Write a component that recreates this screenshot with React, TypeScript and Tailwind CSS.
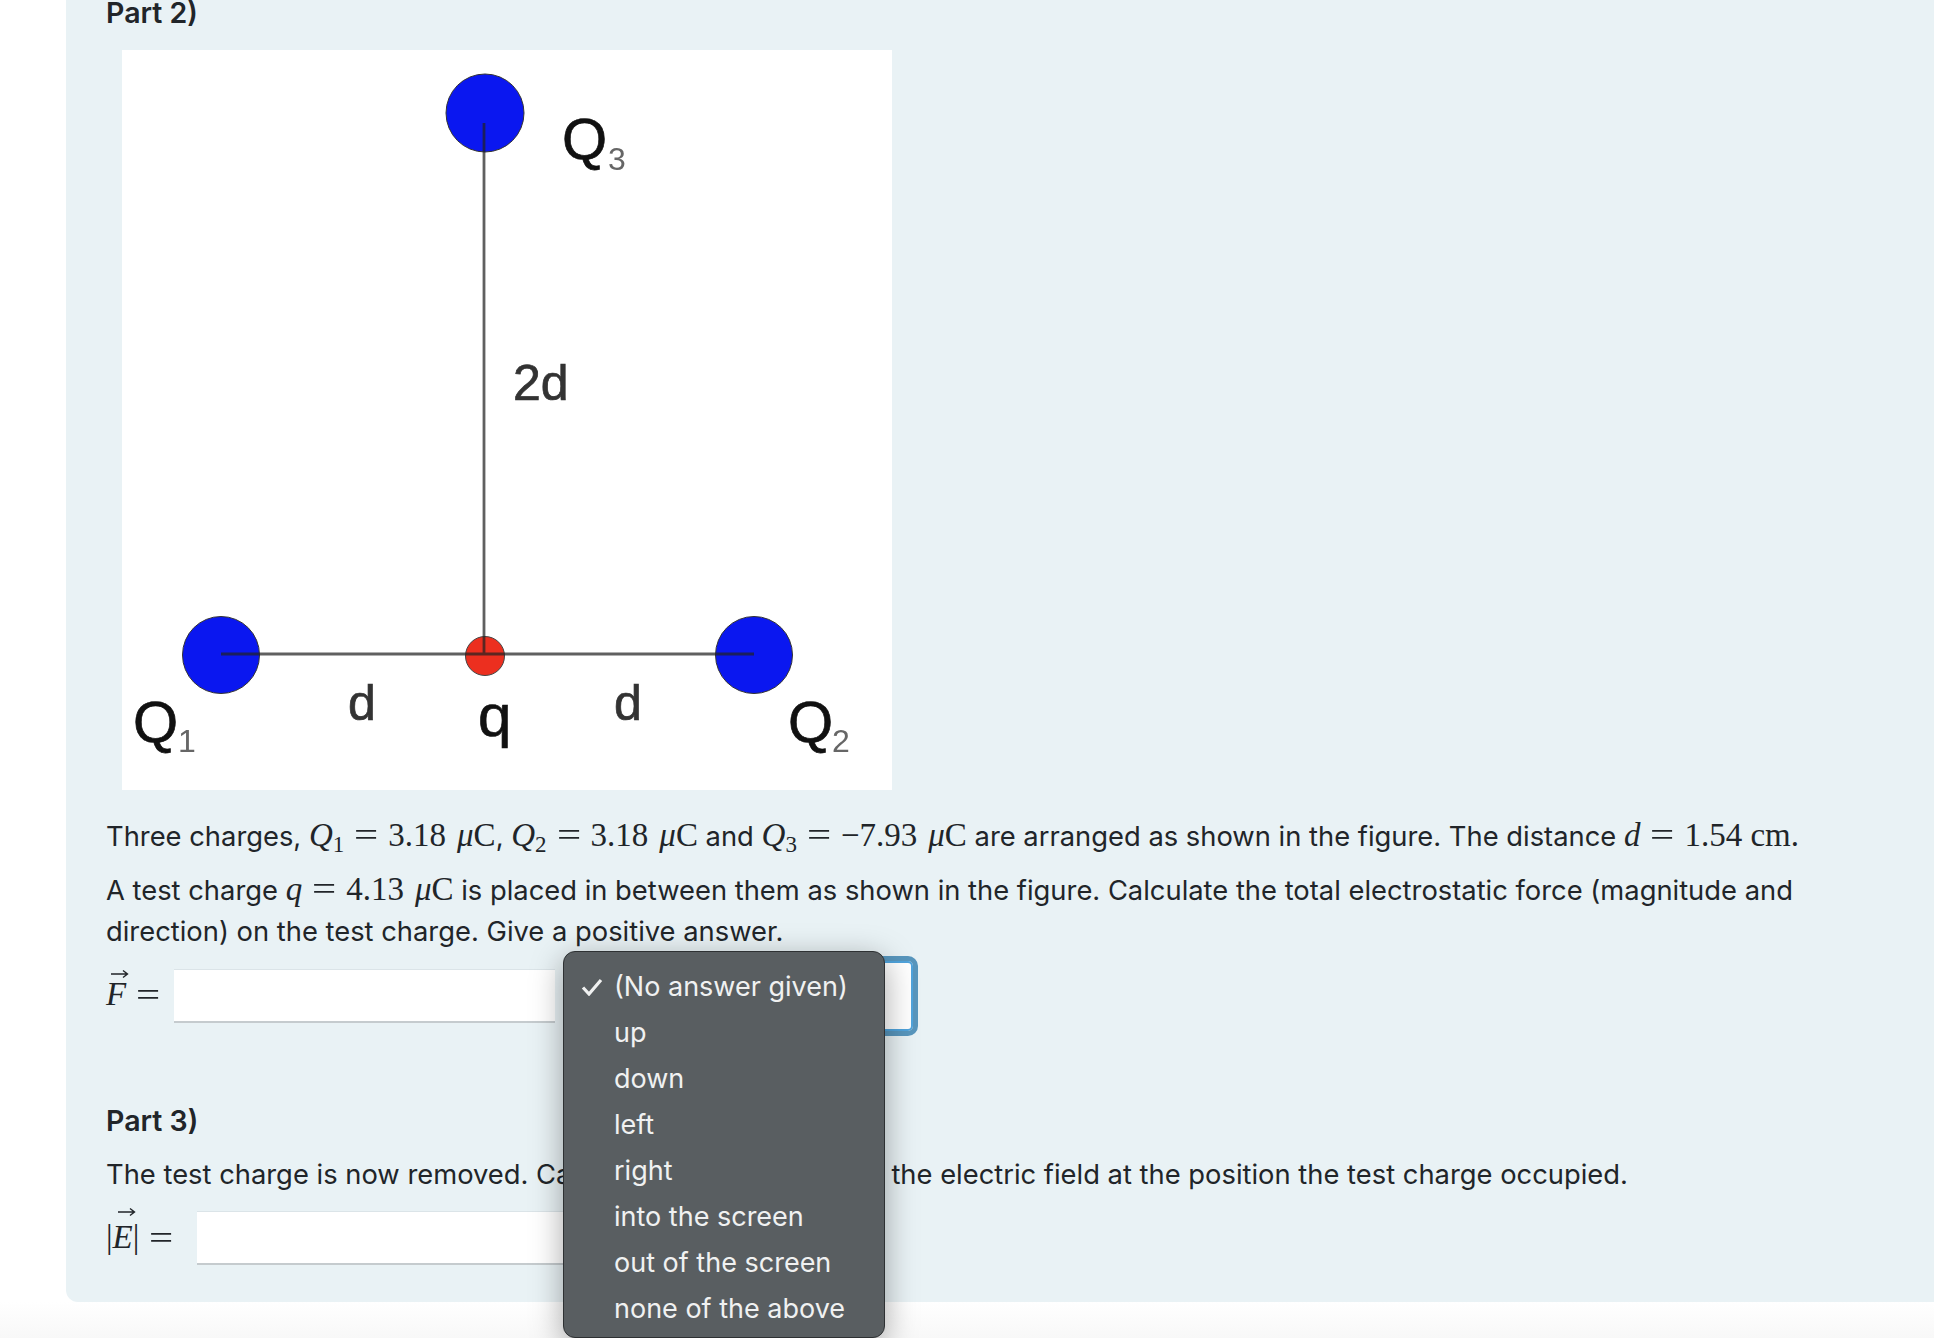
import React from "react";

const serif = "font-['Liberation_Serif',serif]";

function I({ children }: { children: React.ReactNode }) {
  return <span className={`${serif} italic text-[33px] leading-none`}>{children}</span>;
}
function M({ children }: { children: React.ReactNode }) {
  return <span className={`${serif} text-[33px] leading-none`}>{children}</span>;
}
function S({ children }: { children: React.ReactNode }) {
  return <span className={`${serif} text-[23px] leading-none relative top-[6px]`}>{children}</span>;
}
function Eq() {
  return (
    <span className={`${serif} text-[33px] leading-none inline-block w-[24px] text-center scale-x-[1.3] mx-[10px]`}>=</span>
  );
}
function Mu() {
  return <span className={`${serif} italic text-[33px] leading-none ml-[11px]`}>μ</span>;
}
function Vec({ children }: { children: React.ReactNode }) {
  return (
    <span className="relative inline-block">
      <span className={`${serif} italic text-[33px] leading-none`}>{children}</span>
      <svg className="absolute left-[4px] top-[-7px]" width="20" height="12" viewBox="0 0 20 12">
        <path d="M1 6h16M13 2.5l4.5 3.5-4.5 3.5" fill="none" stroke="#212529" strokeWidth="1.4" />
      </svg>
    </span>
  );
}

function Figure() {
  const label = "Liberation Sans, Arial, sans-serif";
  return (
    <svg width="770" height="740" viewBox="0 0 770 740" className="block">
      <g style={{ filter: "blur(0.6px)" }}>
        <circle cx="363" cy="63" r="39" fill="#0a17f0" stroke="#333" strokeWidth="1" />
        <circle cx="99" cy="605" r="38.5" fill="#0a17f0" stroke="#333" strokeWidth="1" />
        <circle cx="632" cy="605" r="38.5" fill="#0a17f0" stroke="#333" strokeWidth="1" />
        <circle cx="363" cy="606" r="19.5" fill="#ec2f1f" stroke="#444" strokeWidth="1" />
        <path d="M362 73V604M99 604H632" fill="none" stroke="#222" strokeOpacity="0.72" strokeWidth="2.8" />
        <g fontFamily={label} fill="#111" stroke="#111" strokeWidth="0.7">
          <text x="440" y="109" fontSize="58">Q</text>
          <text x="486" y="120" fontSize="32" fill="#666" stroke="none">3</text>
          <text x="391" y="350" fontSize="50" fill="#333" stroke="#333">2d</text>
          <text x="11" y="692" fontSize="58">Q</text>
          <text x="56" y="702" fontSize="32" fill="#666" stroke="none">1</text>
          <text x="226" y="670" fontSize="50" fill="#333" stroke="#333">d</text>
          <text x="356" y="686" fontSize="60">q</text>
          <text x="492" y="670" fontSize="50" fill="#333" stroke="#333">d</text>
          <text x="666" y="692" fontSize="58">Q</text>
          <text x="710" y="702" fontSize="32" fill="#666" stroke="none">2</text>
        </g>
      </g>
    </svg>
  );
}

const options = ["up", "down", "left", "right", "into the screen", "out of the screen", "none of the above"];

export default function App() {
  return (
    <div className="relative w-full h-[1338px] overflow-hidden bg-white font-['Inter',sans-serif] text-[27.35px] text-[#212529] flex flex-col">
      <div className="ml-[66px] h-[1302px] shrink-0 bg-[#e9f2f5] rounded-bl-[12px] pl-[40px] pr-[40px]">
        <h3 className="font-semibold text-[28.5px] leading-[40px] mt-[-7px]">Part 2)</h3>
        <div className="ml-[16px] mt-[17px] w-[770px] h-[740px] bg-white">
          <Figure />
        </div>
        <p className="mt-[26px] leading-[41px] whitespace-nowrap">
          Three charges, <I>Q</I>
          <S>1</S>
          <Eq />
          <M>3.18</M>
          <Mu />
          <M>C</M>, <I>Q</I>
          <S>2</S>
          <Eq />
          <M>3.18</M>
          <Mu />
          <M>C</M> and <I>Q</I>
          <S>3</S>
          <Eq />
          <M>−7.93</M>
          <Mu />
          <M>C</M> are arranged as shown in the figure. The distance <I>d</I>
          <Eq />
          <M>1.54 cm.</M>
        </p>
        <p className="mt-[13px] leading-[41px] w-[1760px]">
          A test charge <I>q</I>
          <Eq />
          <M>4.13</M>
          <Mu />
          <M>C</M> is placed in between them as shown in the figure. Calculate the total electrostatic force (magnitude and
          direction) on the test charge. Give a positive answer.
        </p>
        <div className="mt-[19px] flex items-start h-[66px]">
          <span className="w-[68px] h-[53px] -mt-[2px] whitespace-nowrap flex items-center">
            <Vec>F</Vec>
            <Eq />
          </span>
          <div className="w-[381px] h-[54px] -mt-[2px] bg-white border-b-2 border-t border-t-[#dbe4e8] border-b-[#c5cbce]" />
          <div className="ml-[10px] w-[353px] h-[80px] -mt-[15px] bg-white border-[5px] border-[#5896bd] rounded-[10px] shadow-[inset_0_0_0_2px_#4fa3dc]" />
        </div>
        <h3 className="mt-[64px] font-semibold text-[28.5px] leading-[40px]">Part 3)</h3>
        <p className="mt-[13px] leading-[41px]">
          The test charge is now removed. Calculate the magnitude of the electric field at the position the test charge occupied.
        </p>
        <div className="mt-[16px] flex items-center">
          <span className={`w-[91px] h-[53px] whitespace-nowrap flex items-center ${serif} text-[33px]`}>
            |<Vec>E</Vec>|
            <Eq />
          </span>
          <div className="w-[400px] h-[54px] bg-white border-b-2 border-t border-t-[#dbe4e8] border-b-[#c5cbce]" />
        </div>
      </div>
      <div className="flex-1 bg-gradient-to-b from-white to-[#f8f8f8]" />

      <div className="absolute left-[563px] top-[951px] w-[322px] h-[387px] rounded-[12px] border border-[#2e3133] bg-[#595e61] shadow-[0_8px_32px_rgba(0,0,0,0.35)] text-[27px] text-[#f0f1f1] pt-[12px]">
        <div className="relative h-[46px] pl-[50px] leading-[46px]">
          <svg className="absolute left-[17px] top-[14px]" width="22" height="18" viewBox="0 0 22 18">
            <path d="M2 9.5l6 6.5L20 2" fill="none" stroke="#f0f1f1" strokeWidth="3.2" />
          </svg>
          (No answer given)
        </div>
        {options.map((o) => (
          <div key={o} className="h-[46px] pl-[50px] leading-[46px] whitespace-nowrap">
            {o}
          </div>
        ))}
      </div>
    </div>
  );
}
